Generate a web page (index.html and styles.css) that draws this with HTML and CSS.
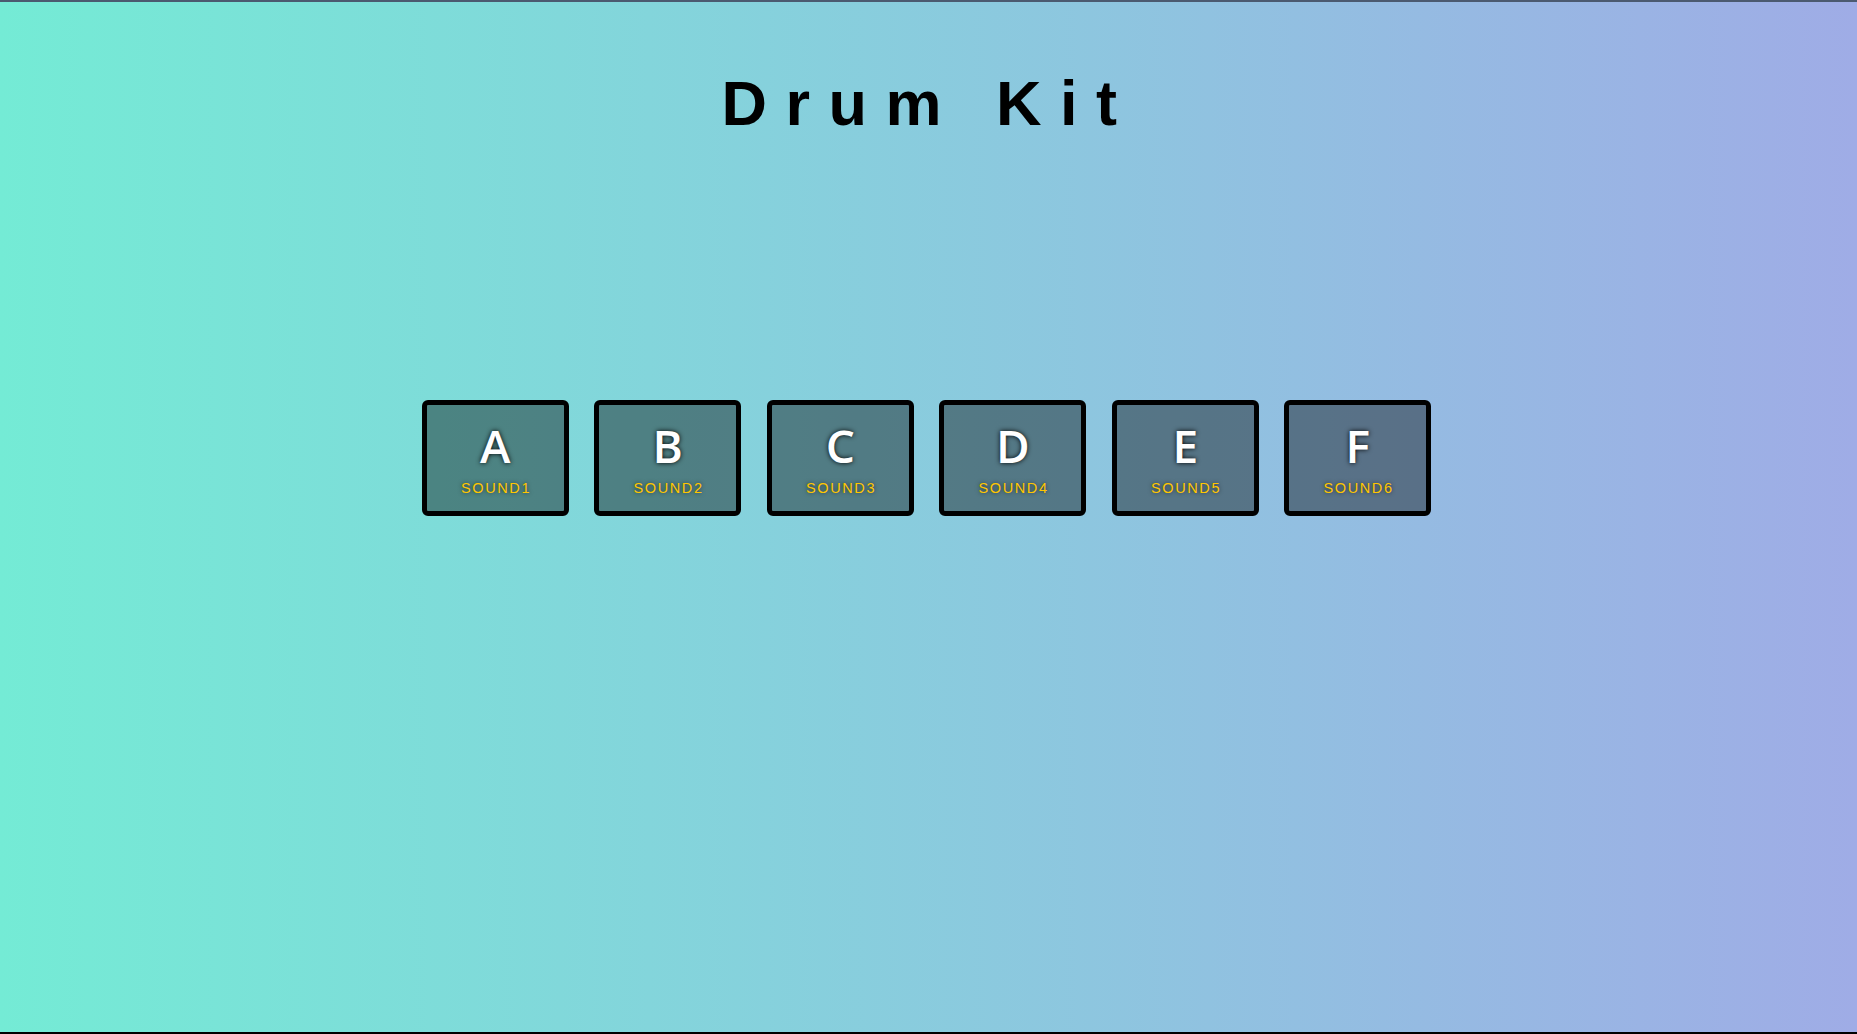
FILE: index.html
```html
<!DOCTYPE html>
<html lang="en">
<head>
<meta charset="utf-8">
<title>Drum Kit</title>
<link rel="stylesheet" href="styles.css">
</head>
<body>
  <h1 class="title">Drum Kit</h1>
  <div class="keys">
    <div class="key"><kbd class="key-letter">A</kbd><span class="sound">sound1</span></div>
    <div class="key"><kbd class="key-letter">B</kbd><span class="sound">sound2</span></div>
    <div class="key"><kbd class="key-letter">C</kbd><span class="sound">sound3</span></div>
    <div class="key"><kbd class="key-letter">D</kbd><span class="sound">sound4</span></div>
    <div class="key"><kbd class="key-letter">E</kbd><span class="sound">sound5</span></div>
    <div class="key"><kbd class="key-letter">F</kbd><span class="sound">sound6</span></div>
  </div>
</body>
</html>
```

FILE: styles.css
```css
* {
  box-sizing: border-box;
}

html, body {
  margin: 0;
  padding: 0;
  height: 100%;
}

body {
  background: linear-gradient(to right, #74ebd5, #9face6);
  border-top: 2px solid #4b5a70;
  border-bottom: 2px solid #000;
  font-family: "Liberation Sans", Arial, sans-serif;
  display: flex;
  flex-direction: column;
  align-items: stretch;
}

.title {
  margin: 65px 0 0;
  font-family: "Liberation Sans", Arial, sans-serif;
  font-weight: bold;
  font-size: 63px;
  line-height: 72px;
  letter-spacing: 18.5px;
  text-align: center;
  color: #000;
}

.keys {
  margin-top: 261px;
  display: flex;
  justify-content: center;
  gap: 25.5px;
  padding-right: 4px;
}

.key {
  width: 147px;
  height: 116px;
  border: 5px solid #000;
  border-radius: 6px;
  background: rgba(0, 0, 0, 0.4);
  display: flex;
  flex-direction: column;
  align-items: center;
  padding-top: 17px;
  color: #fff;
  text-shadow: 0 0 5px #000;
}

.key-letter {
  display: block;
  font-family: "Open Sans", "Noto Sans", sans-serif;
  font-size: 46px;
  line-height: 46px;
  font-weight: 600;
}

.sound {
  display: block;
  margin-top: 12px;
  font-family: "Liberation Sans", Arial, sans-serif;
  font-size: 14.5px;
  line-height: 16px;
  letter-spacing: 1.6px;
  text-transform: uppercase;
  color: #ffc600;
  padding-left: 1.6px;
  text-shadow: 0 0 4px rgba(0, 0, 0, 0.6);
}
```
